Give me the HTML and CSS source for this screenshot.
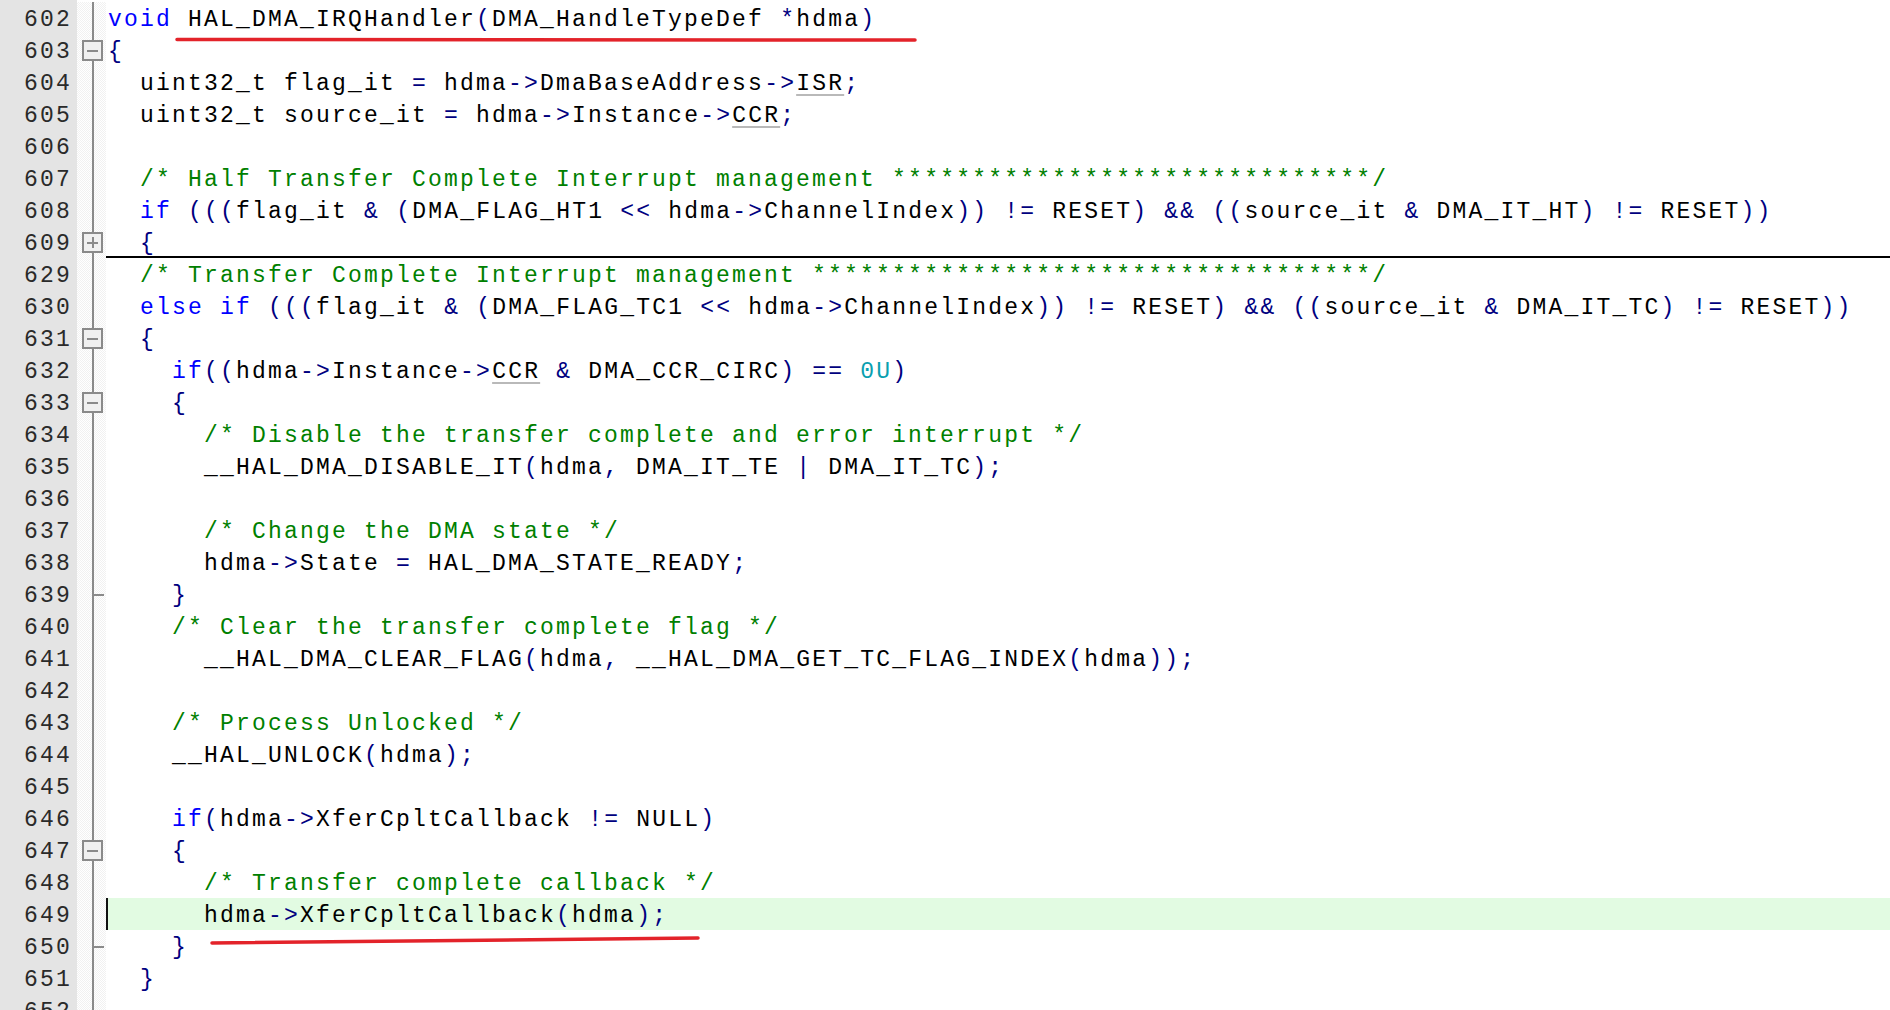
FILE: index.html
```html
<!DOCTYPE html>
<html lang="en">
<head>
<meta charset="UTF-8" />
<title>stm32f1xx_hal_dma.c</title>
<link rel="stylesheet" href="styles.css">
</head>
<body>

<!-- Editor view -->
<div class="editor">
  <div class="row"><div class="ln">602</div><div class="fold"></div><div class="code"><span class="k">void</span> HAL_DMA_IRQHandler<span class="o">(</span>DMA_HandleTypeDef <span class="o">*</span>hdma<span class="o">)</span></div></div>
  <div class="row"><div class="ln">603</div><div class="fold"><span class="box"></span></div><div class="code"><span class="o">{</span></div></div>
  <div class="row"><div class="ln">604</div><div class="fold"></div><div class="code">  uint32_t flag_it <span class="o">=</span> hdma<span class="o">-&gt;</span>DmaBaseAddress<span class="o">-&gt;</span><span class="u">ISR</span><span class="o">;</span></div></div>
  <div class="row"><div class="ln">605</div><div class="fold"></div><div class="code">  uint32_t source_it <span class="o">=</span> hdma<span class="o">-&gt;</span>Instance<span class="o">-&gt;</span><span class="u">CCR</span><span class="o">;</span></div></div>
  <div class="row"><div class="ln">606</div><div class="fold"></div><div class="code"></div></div>
  <div class="row"><div class="ln">607</div><div class="fold"></div><div class="code">  <span class="c">/* Half Transfer Complete Interrupt management ******************************/</span></div></div>
  <div class="row"><div class="ln">608</div><div class="fold"></div><div class="code">  <span class="k">if</span> <span class="o">(((</span>flag_it <span class="o">&amp;</span> <span class="o">(</span>DMA_FLAG_HT1 <span class="o">&lt;&lt;</span> hdma<span class="o">-&gt;</span>ChannelIndex<span class="o">))</span> <span class="o">!=</span> RESET<span class="o">)</span> <span class="o">&amp;&amp;</span> <span class="o">((</span>source_it <span class="o">&amp;</span> DMA_IT_HT<span class="o">)</span> <span class="o">!=</span> RESET<span class="o">))</span></div></div>
  <div class="row"><div class="ln">609</div><div class="fold"><span class="box plus"></span></div><div class="code folded">  <span class="o">{</span></div></div>
  <div class="row"><div class="ln">629</div><div class="fold"></div><div class="code">  <span class="c">/* Transfer Complete Interrupt management ***********************************/</span></div></div>
  <div class="row"><div class="ln">630</div><div class="fold"></div><div class="code">  <span class="k">else</span> <span class="k">if</span> <span class="o">(((</span>flag_it <span class="o">&amp;</span> <span class="o">(</span>DMA_FLAG_TC1 <span class="o">&lt;&lt;</span> hdma<span class="o">-&gt;</span>ChannelIndex<span class="o">))</span> <span class="o">!=</span> RESET<span class="o">)</span> <span class="o">&amp;&amp;</span> <span class="o">((</span>source_it <span class="o">&amp;</span> DMA_IT_TC<span class="o">)</span> <span class="o">!=</span> RESET<span class="o">))</span></div></div>
  <div class="row"><div class="ln">631</div><div class="fold"><span class="box"></span></div><div class="code">  <span class="o">{</span></div></div>
  <div class="row"><div class="ln">632</div><div class="fold"></div><div class="code">    <span class="k">if</span><span class="o">((</span>hdma<span class="o">-&gt;</span>Instance<span class="o">-&gt;</span><span class="u">CCR</span> <span class="o">&amp;</span> DMA_CCR_CIRC<span class="o">)</span> <span class="o">==</span> <span class="n">0U</span><span class="o">)</span></div></div>
  <div class="row"><div class="ln">633</div><div class="fold"><span class="box"></span></div><div class="code">    <span class="o">{</span></div></div>
  <div class="row"><div class="ln">634</div><div class="fold"></div><div class="code">      <span class="c">/* Disable the transfer complete and error interrupt */</span></div></div>
  <div class="row"><div class="ln">635</div><div class="fold"></div><div class="code">      __HAL_DMA_DISABLE_IT<span class="o">(</span>hdma<span class="o">,</span> DMA_IT_TE <span class="o">|</span> DMA_IT_TC<span class="o">);</span></div></div>
  <div class="row"><div class="ln">636</div><div class="fold"></div><div class="code"></div></div>
  <div class="row"><div class="ln">637</div><div class="fold"></div><div class="code">      <span class="c">/* Change the DMA state */</span></div></div>
  <div class="row"><div class="ln">638</div><div class="fold"></div><div class="code">      hdma<span class="o">-&gt;</span>State <span class="o">=</span> HAL_DMA_STATE_READY<span class="o">;</span></div></div>
  <div class="row"><div class="ln">639</div><div class="fold end"></div><div class="code">    <span class="o">}</span></div></div>
  <div class="row"><div class="ln">640</div><div class="fold"></div><div class="code">    <span class="c">/* Clear the transfer complete flag */</span></div></div>
  <div class="row"><div class="ln">641</div><div class="fold"></div><div class="code">      __HAL_DMA_CLEAR_FLAG<span class="o">(</span>hdma<span class="o">,</span> __HAL_DMA_GET_TC_FLAG_INDEX<span class="o">(</span>hdma<span class="o">));</span></div></div>
  <div class="row"><div class="ln">642</div><div class="fold"></div><div class="code"></div></div>
  <div class="row"><div class="ln">643</div><div class="fold"></div><div class="code">    <span class="c">/* Process Unlocked */</span></div></div>
  <div class="row"><div class="ln">644</div><div class="fold"></div><div class="code">    __HAL_UNLOCK<span class="o">(</span>hdma<span class="o">);</span></div></div>
  <div class="row"><div class="ln">645</div><div class="fold"></div><div class="code"></div></div>
  <div class="row"><div class="ln">646</div><div class="fold"></div><div class="code">    <span class="k">if</span><span class="o">(</span>hdma<span class="o">-&gt;</span>XferCpltCallback <span class="o">!=</span> NULL<span class="o">)</span></div></div>
  <div class="row"><div class="ln">647</div><div class="fold"><span class="box"></span></div><div class="code">    <span class="o">{</span></div></div>
  <div class="row"><div class="ln">648</div><div class="fold"></div><div class="code">      <span class="c">/* Transfer complete callback */</span></div></div>
  <div class="row"><div class="ln">649</div><div class="fold"></div><div class="code current">      hdma<span class="o">-&gt;</span>XferCpltCallback<span class="o">(</span>hdma<span class="o">);</span></div></div>
  <div class="row"><div class="ln">650</div><div class="fold end"></div><div class="code">    <span class="o">}</span></div></div>
  <div class="row"><div class="ln">651</div><div class="fold"></div><div class="code">  <span class="o">}</span></div></div>
  <div class="row"><div class="ln">652</div><div class="fold"></div><div class="code"></div></div>
</div>

<!-- Red marker strokes drawn over the code -->
<svg class="marks" width="1890" height="1010" viewBox="0 0 1890 1010">
  <line x1="177" y1="39.5" x2="915" y2="40" />
  <line x1="212" y1="943" x2="698" y2="938" />
</svg>

</body>
</html>
```

FILE: styles.css
```css
/* Base */
body {
  margin: 0;
  background-color: #fff;
  color: #000;
  font-family: "Liberation Mono", "Courier New", monospace;
  font-size: 23px;
  letter-spacing: 2.2px;
  overflow: hidden;
  position: relative;
  height: 1010px;
}
/* Editor */
.editor {
  padding-top: 2px;
  background: linear-gradient(to right, #e4e4e4 77px, #fff 77px);
}
.row {
  display: flex;
  height: 32px;
}
/* Line numbers */
.ln {
  flex: none;
  width: 77px;
  box-sizing: border-box;
  padding: 4px 5px 0 0;
  line-height: 28px;
  text-align: right;
  background-color: #e4e4e4;
  color: #2a2a2a;
}
/* Fold margin */
.fold {
  flex: none;
  width: 29px;
  display: flex;
  align-items: center;
  background:
    linear-gradient(#8a8a8a, #8a8a8a) 15px 0 / 2px 100% no-repeat,
    repeating-conic-gradient(#f1f1f1 0 25%, #fff 0 50%) 0 0 / 2px 2px;
}
.fold.end {
  background:
    linear-gradient(#8a8a8a, #8a8a8a) 15px 16px / 12px 2px no-repeat,
    linear-gradient(#8a8a8a, #8a8a8a) 15px 0 / 2px 100% no-repeat,
    repeating-conic-gradient(#f1f1f1 0 25%, #fff 0 50%) 0 0 / 2px 2px;
}
.box {
  position: relative;
  width: 21px;
  height: 21px;
  margin: 1px 0 0 5px;
  box-sizing: border-box;
  border: 2px solid #8a8a8a;
  background-color: #f0f0f0;
}
.box::before {
  content: "";
  position: absolute;
  left: 3px;
  right: 3px;
  top: 7.5px;
  height: 2px;
  background-color: #8a8a8a;
}
.box.plus::after {
  content: "";
  position: absolute;
  top: 3px;
  bottom: 3px;
  left: 7.5px;
  width: 2px;
  background-color: #8a8a8a;
}
/* Code text */
.code {
  flex: 1;
  min-width: 0;
  padding: 4px 0 0 2px;
  line-height: 28px;
  white-space: pre;
  overflow: hidden;
}
.code.folded {
  box-shadow: inset 0 -2px 0 #000;
}
.code.current {
  background-color: #e2fbe2;
  border-left: 2px solid #111;
  padding-left: 0;
}
.k { color: #0000ff; }
.c { color: #008000; }
.o { color: #000080; }
.n { color: #0a9fb0; }
.u {
  text-decoration: underline;
  text-decoration-color: #b9b9b9;
  text-decoration-thickness: 2px;
  text-underline-offset: 4px;
}
/* Red markers */
.marks {
  position: absolute;
  top: 0;
  left: 0;
  pointer-events: none;
}
.marks line {
  stroke: #e3232a;
  stroke-width: 3.5;
  stroke-linecap: round;
}
```
